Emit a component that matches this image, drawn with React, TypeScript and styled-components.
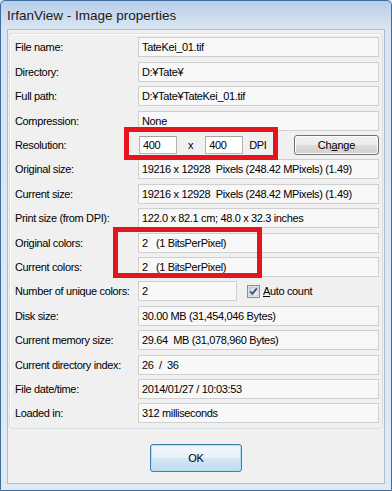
import React from "react";
import styled, { createGlobalStyle } from "styled-components";

const Global = createGlobalStyle`
  html, body { margin: 0; padding: 0; background: #dbe6f3; }
  body { width: 392px; height: 491px; overflow: hidden; }
`;

const Window = styled.div`
  box-sizing: border-box;
  width: 392px;
  height: 491px;
  border: 1px solid #3f6c9f;
  border-radius: 5px 5px 0 0;
  background: linear-gradient(to bottom, #b5cde8 0px, #cadaee 14px, #d9e5f2 28px, #e0e9f4 100%);
  display: flex;
  flex-direction: column;
  font-family: "Liberation Sans", Arial, sans-serif;
`;

const TitleBar = styled.div`
  height: 28px;
  flex: none;
  display: flex;
  align-items: center;
  padding-left: 6px;
  font-size: 13.5px;
  color: #1a1a1a;
`;

const Client = styled.div`
  flex: 1;
  margin: 0 6px 6px 6px;
  border: 1px solid #a9bdd4;
  background: #f0f0f0;
  display: flex;
  flex-direction: column;
  font-size: 11px;
  letter-spacing: -0.35px;
  color: #000;
`;

const Group = styled.div`
  position: relative;
  margin: 3px 1px 0 1px;
  border: 1px solid #d5dfe5;
  border-radius: 3px;
  box-shadow: inset 1px 1px 0 #ffffff;
  padding: 1.3px 3px 2.3px 5px;
  display: grid;
  grid-template-columns: 123px 1fr;
  grid-auto-rows: 24.4px;
`;

const Label = styled.div`
  display: flex;
  align-items: center;
  white-space: nowrap;
`;

const Cell = styled.div`
  display: flex;
  align-items: center;
  min-width: 0;
`;

const ValueBox = styled.div<{ $w?: number }>`
  box-sizing: border-box;
  height: 20px;
  ${(p) => (p.$w ? `width: ${p.$w}px; flex: none;` : "flex: 1;")}
  border: 1px solid #cfcfcf;
  background: #f8f8f8;
  padding: 0 3px;
  display: flex;
  align-items: center;
  white-space: nowrap;
  overflow: hidden;
`;

const Edit = styled.div<{ $ml: number }>`
  box-sizing: border-box;
  width: 38px;
  height: 18px;
  flex: none;
  margin-left: ${(p) => p.$ml}px;
  border: 1px solid #b4b4b4;
  border-top-color: #a3a3a3;
  background: #ffffff;
  padding: 0 3px;
  display: flex;
  align-items: center;
`;

const Text = styled.span<{ $ml: number }>`
  margin-left: ${(p) => p.$ml}px;
  flex: none;
`;

const Button = styled.button<{ $w: number; $h: number; $default?: boolean }>`
  box-sizing: border-box;
  width: ${(p) => p.$w}px;
  height: ${(p) => p.$h}px;
  flex: none;
  padding: 0;
  font-family: "Liberation Sans", Arial, sans-serif;
  font-size: 11px;
  letter-spacing: -0.2px;
  color: #000;
  border-radius: 3px;
  border: 1px solid ${(p) => (p.$default ? "#3c7fb1" : "#707070")};
  background: ${(p) =>
    p.$default
      ? "linear-gradient(to bottom, #f2f8fc 0%, #e8f2f9 48%, #d4e7f5 52%, #c3dcee 100%)"
      : "linear-gradient(to bottom, #f2f2f2 0%, #ebebeb 48%, #dddddd 52%, #cfcfcf 100%)"};
  box-shadow: inset 0 0 0 1px ${(p) => (p.$default ? "#aee0f8" : "#fcfcfc")};
  display: flex;
  align-items: center;
  justify-content: center;
`;

const ChangeBtn = styled(Button)`
  margin-left: auto;
`;

const Footer = styled.div`
  display: flex;
  justify-content: center;
  margin-top: 15px;
`;

const CheckWrap = styled.label`
  display: flex;
  align-items: center;
  margin-left: 10px;
  gap: 3px;
  white-space: nowrap;
`;

const Under = styled.span`
  text-decoration: underline;
`;

const Mark = styled.div<{ $l: number; $t: number; $w: number; $h: number }>`
  position: absolute;
  left: ${(p) => p.$l}px;
  top: ${(p) => p.$t}px;
  width: ${(p) => p.$w}px;
  height: ${(p) => p.$h}px;
  box-sizing: border-box;
  border: 5px solid #e3161e;
  pointer-events: none;
`;

const CheckBox = () => (
  <svg width="13" height="13" viewBox="0 0 13 13">
    <defs>
      <linearGradient id="cbg" x1="0" y1="0" x2="1" y2="1">
        <stop offset="0" stopColor="#cbd1d9" />
        <stop offset="1" stopColor="#f3f4f6" />
      </linearGradient>
    </defs>
    <rect x="0.5" y="0.5" width="12" height="12" fill="#f4f4f4" stroke="#8e8f8f" />
    <rect x="2" y="2" width="9" height="9" fill="url(#cbg)" stroke="#aeb3b9" strokeWidth="0.6" />
    <path d="M3.2 6.4 L5.4 8.8 L9.8 3.4" fill="none" stroke="#3b4f8c" strokeWidth="1.8" />
  </svg>
);

const rows: [string, string][] = [
  ["File name:", "TateKei_01.tif"],
  ["Directory:", "D:\u00a5Tate\u00a5"],
  ["Full path:", "D:\u00a5Tate\u00a5TateKei_01.tif"],
  ["Compression:", "None"],
];

const rows2: [string, string][] = [
  ["Original size:", "19216 x 12928  Pixels (248.42 MPixels) (1.49)"],
  ["Current size:", "19216 x 12928  Pixels (248.42 MPixels) (1.49)"],
  ["Print size (from DPI):", "122.0 x 82.1 cm; 48.0 x 32.3 inches"],
  ["Original colors:", "2   (1 BitsPerPixel)"],
  ["Current colors:", "2   (1 BitsPerPixel)"],
];

const rows3: [string, string][] = [
  ["Disk size:", "30.00 MB (31,454,046 Bytes)"],
  ["Current memory size:", "29.64  MB (31,078,960 Bytes)"],
  ["Current directory index:", "26  /  36"],
  ["File date/time:", "2014/01/27 / 10:03:53"],
  ["Loaded in:", "312 milliseconds"],
];

const Row = ({ label, value }: { label: string; value: string }) => (
  <>
    <Label>{label}</Label>
    <Cell>
      <ValueBox style={{ whiteSpace: "pre" }}>{value}</ValueBox>
    </Cell>
  </>
);

export default function App() {
  return (
    <>
      <Global />
      <Window>
        <TitleBar>IrfanView - Image properties</TitleBar>
        <Client>
          <Group>
            {rows.map(([l, v]) => (
              <Row key={l} label={l} value={v} />
            ))}
            <Label>Resolution:</Label>
            <Cell>
              <Edit $ml={1}>400</Edit>
              <Text $ml={11}>x</Text>
              <Edit $ml={12}>400</Edit>
              <Text $ml={6}>DPI</Text>
              <ChangeBtn $w={85} $h={20}>
                Ch<Under>a</Under>nge
              </ChangeBtn>
            </Cell>
            {rows2.map(([l, v]) => (
              <Row key={l} label={l} value={v} />
            ))}
            <Label>Number of unique colors:</Label>
            <Cell>
              <ValueBox $w={99}>2</ValueBox>
              <CheckWrap>
                <CheckBox />
                <span>
                  <Under>A</Under>uto count
                </span>
              </CheckWrap>
            </Cell>
            {rows3.map(([l, v]) => (
              <Row key={l} label={l} value={v} />
            ))}
            <Mark $l={114} $t={93} $w={154} $h={33} />
            <Mark $l={103} $t={193} $w={149} $h={51} />
          </Group>
          <Footer>
            <Button $w={92} $h={28} $default>
              OK
            </Button>
          </Footer>
        </Client>
      </Window>
    </>
  );
}
